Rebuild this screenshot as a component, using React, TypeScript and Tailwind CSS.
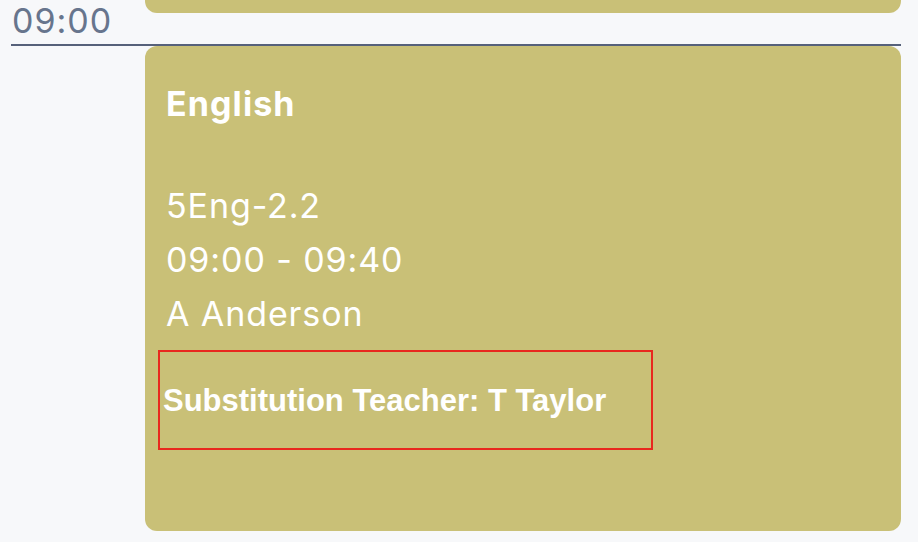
export default function App() {
  return (
    <div className="w-[918px] h-[542px] overflow-hidden bg-[#f7f8fa] pl-[11px]" style={{ fontFamily: 'Inter, "Noto Sans", sans-serif' }}>
      <div className="flex w-[890px] h-[44px]">
        <div className="w-[134px] pl-[1px] pt-[1px] text-[34px] leading-[40px] tracking-[1px] text-[#67758d]">09:00</div>
        <div className="flex-1 h-[13px] bg-[#c9c077] rounded-b-[12px]"></div>
      </div>
      <div className="w-[890px] h-[2px] bg-[#56617a]"></div>
      <div className="ml-[134px] w-[756px] h-[485px] bg-[#c9c077] rounded-[12px] pt-[36px] text-white">
        <div className="pl-[21px] text-[34px] leading-[44px] font-bold tracking-[1.1px]">English</div>
        <div className="pl-[21px] mt-[53px] text-[34px] leading-[54px] tracking-[0.9px]">
          <div>5Eng-2.2</div>
          <div>09:00 - 09:40</div>
          <div>A Anderson</div>
        </div>
        <div className="ml-[13px] mt-[9px] w-[495px] h-[100px] border-2 border-[#e8281e] flex items-center pl-[3px]">
          <span className="text-[31px] leading-[37px] font-bold" style={{ fontFamily: '"Liberation Sans", Arial, sans-serif' }}>
            Substitution Teacher: T Taylor
          </span>
        </div>
      </div>
    </div>
  );
}
